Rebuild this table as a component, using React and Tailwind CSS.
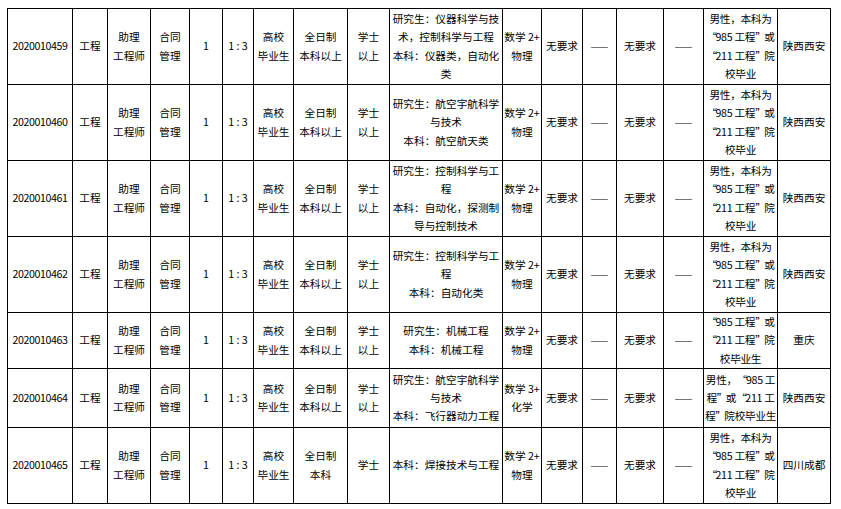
import React from "react";

const widths = [65, 35, 43, 39, 33, 31, 40, 54, 42, 113, 39, 41, 34, 47, 40, 74, 53];

const rows = [
  {
    id: "2020010459",
    h: 76,
    edu: ["全日制", "本科以上"],
    degree: ["学士", "以上"],
    major: ["研究生：仪器科学与技", "术，控制科学与工程", "本科：仪器类，自动化", "类"],
    subject: ["数学 2+", "物理"],
    other: ["男性，本科为", "“985 工程”或", "“211 工程”院", "校毕业"],
    place: "陕西西安",
  },
  {
    id: "2020010460",
    h: 76,
    edu: ["全日制", "本科以上"],
    degree: ["学士", "以上"],
    major: ["研究生：航空宇航科学", "与技术", "本科：航空航天类"],
    subject: ["数学 2+", "物理"],
    other: ["男性，本科为", "“985 工程”或", "“211 工程”院", "校毕业"],
    place: "陕西西安",
  },
  {
    id: "2020010461",
    h: 76,
    edu: ["全日制", "本科以上"],
    degree: ["学士", "以上"],
    major: ["研究生：控制科学与工", "程", "本科：自动化，探测制", "导与控制技术"],
    subject: ["数学 2+", "物理"],
    other: ["男性，本科为", "“985 工程”或", "“211 工程”院", "校毕业"],
    place: "陕西西安",
  },
  {
    id: "2020010462",
    h: 76,
    edu: ["全日制", "本科以上"],
    degree: ["学士", "以上"],
    major: ["研究生：控制科学与工", "程", "本科：自动化类"],
    subject: ["数学 2+", "物理"],
    other: ["男性，本科为", "“985 工程”或", "“211 工程”院", "校毕业"],
    place: "陕西西安",
  },
  {
    id: "2020010463",
    h: 56,
    edu: ["全日制", "本科以上"],
    degree: ["学士", "以上"],
    major: ["研究生：机械工程", "本科：机械工程"],
    subject: ["数学 2+", "物理"],
    other: ["“985 工程”或", "“211 工程”院", "校毕业生"],
    place: "重庆",
  },
  {
    id: "2020010464",
    h: 59,
    edu: ["全日制", "本科以上"],
    degree: ["学士", "以上"],
    major: ["研究生：航空宇航科学", "与技术", "本科：飞行器动力工程"],
    subject: ["数学 3+", "化学"],
    other: ["男性，“985 工", "程”或“211 工", "程”院校毕业生"],
    place: "陕西西安",
  },
  {
    id: "2020010465",
    h: 76,
    edu: ["全日制", "本科"],
    degree: ["学士"],
    major: ["本科：焊接技术与工程"],
    subject: ["数学 2+", "物理"],
    other: ["男性，本科为", "“985 工程”或", "“211 工程”院", "校毕业"],
    place: "四川成都",
  },
];

// quotes sit in a full-width box like the source table
function Quoted({ text }) {
  return text.split(/([“”])/).map((part, i) => {
    if (part === "“")
      return (
        <span key={i} className="inline-block w-[0.85em] text-right">
          {part}
        </span>
      );
    if (part === "”")
      return (
        <span key={i} className="inline-block w-[0.85em] text-left">
          {part}
        </span>
      );
    return part;
  });
}

function Lines({ items }) {
  return items.map((t, i) => (
    <div key={i} className="whitespace-nowrap">
      <Quoted text={t} />
    </div>
  ));
}

function Cell({ children, className = "" }) {
  return (
    <td className={"border border-black p-0 text-center align-middle overflow-visible " + className}>
      {children}
    </td>
  );
}

function Dash() {
  return (
    <Cell>
      <span className="text-[#555]">——</span>
    </Cell>
  );
}

export default function App() {
  return (
    <div
      className="w-[841px] h-[509px] bg-white pt-[8px] pl-[7px] text-black text-[10.67px] leading-[18.3px]"
      style={{ fontFamily: '"Noto Sans CJK SC", "Liberation Sans", sans-serif' }}
    >
      <table className="table-fixed border-collapse w-[824px]">
        <colgroup>
          {widths.map((w, i) => (
            <col key={i} style={{ width: w }} />
          ))}
        </colgroup>
        <tbody>
          {rows.map((r) => (
            <tr key={r.id} style={{ height: r.h }}>
              <Cell className="tracking-[-0.4px]">{r.id}</Cell>
              <Cell>工程</Cell>
              <Cell>
                <Lines items={["助理", "工程师"]} />
              </Cell>
              <Cell>
                <Lines items={["合同", "管理"]} />
              </Cell>
              <Cell>1</Cell>
              <Cell>1 : 3</Cell>
              <Cell>
                <Lines items={["高校", "毕业生"]} />
              </Cell>
              <Cell>
                <Lines items={r.edu} />
              </Cell>
              <Cell>
                <Lines items={r.degree} />
              </Cell>
              <Cell>
                <Lines items={r.major} />
              </Cell>
              <Cell>
                <Lines items={r.subject} />
              </Cell>
              <Cell>无要求</Cell>
              <Dash />
              <Cell>无要求</Cell>
              <Dash />
              <Cell className="tracking-[-0.3px]">
                <Lines items={r.other} />
              </Cell>
              <Cell>{r.place}</Cell>
            </tr>
          ))}
        </tbody>
      </table>
    </div>
  );
}
